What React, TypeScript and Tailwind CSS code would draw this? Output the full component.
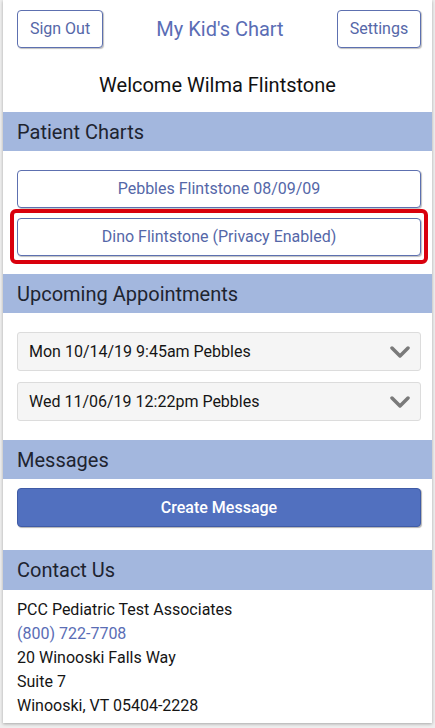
import React from 'react';

const font = { fontFamily: 'Roboto, "Noto Sans", Arial, sans-serif' };

const SectionHeader: React.FC<{ title: string; h?: string }> = ({ title, h = 'h-[39px]' }) => (
  <div className={`${h} bg-[#a3b7de] px-[14px] flex items-center text-[20px] text-[#1e2430]`}>
    {title}
  </div>
);

const OutlineButton: React.FC<{ label: string; className?: string }> = ({ label, className = '' }) => (
  <button
    className={`h-[38px] rounded-[4px] border border-[#5d70b0] bg-white text-[#5567a8] shadow-[1px_1px_1px_rgba(0,0,0,0.25)] ${className}`}
  >
    {label}
  </button>
);

const Chevron = () => (
  <svg width="20" height="14" viewBox="0 0 20 14" className="shrink-0">
    <polyline points="2,3 10,11 18,3" fill="none" stroke="#7a7a7a" strokeWidth="3.5" strokeLinecap="round" strokeLinejoin="round" />
  </svg>
);

const Appointment: React.FC<{ label: string }> = ({ label }) => (
  <div className="h-[39px] rounded-[3px] border border-[#dcdcdc] bg-[#f5f5f5] pl-[11px] pr-[10px] flex items-center justify-between text-[16px] text-[#151515]">
    <span>{label}</span>
    <Chevron />
  </div>
);

export default function App() {
  return (
    <div className="min-h-[728px] bg-[#eeeeee] px-[3px]" style={font}>
      <div className="bg-white shadow-[0_1px_3px_rgba(0,0,0,0.3)] pb-[5px]">
        <div className="pl-[14px] pr-[11px] pt-[10px] flex items-center justify-between">
          <OutlineButton label="Sign Out" className="w-[86px] text-[16px]" />
          <div className="text-[20px] text-[#5a6db5]">My Kid's Chart</div>
          <OutlineButton label="Settings" className="w-[84px] text-[16px]" />
        </div>
        <div className="mt-[25px] mb-[15px] text-center text-[20px] leading-[24px] text-[#111]">
          Welcome Wilma Flintstone
        </div>

        <SectionHeader title="Patient Charts" />
        <div className="pl-[14px] pr-[11px] pt-[19px] pb-[18px] flex flex-col gap-[10px]">
          <OutlineButton label="Pebbles Flintstone 08/09/09" className="w-full text-[16px]" />
          <div className="relative">
            <OutlineButton label="Dino Flintstone (Privacy Enabled)" className="w-full text-[16px]" />
            <span className="pointer-events-none absolute -top-[9px] -bottom-[8px] -left-[7px] -right-[7px] rounded-[6px] border-[4px] border-[#d9000d]" />
          </div>
        </div>

        <SectionHeader title="Upcoming Appointments" />
        <div className="pl-[14px] pr-[11px] pt-[19px] pb-[19px] flex flex-col gap-[11px]">
          <Appointment label="Mon 10/14/19 9:45am Pebbles" />
          <Appointment label="Wed 11/06/19 12:22pm Pebbles" />
        </div>

        <SectionHeader title="Messages" />
        <div className="pl-[14px] pr-[11px] pt-[9px] pb-[23px]">
          <button className="w-full h-[39px] rounded-[4px] bg-[#5170bf] border border-[#3f5ba6] text-white text-[16px] font-medium shadow-[1px_1px_1px_rgba(0,0,0,0.3)]">
            Create Message
          </button>
        </div>

        <SectionHeader title="Contact Us" h="h-[40px]" />
        <div className="px-[14px] pt-[8px] text-[16px] leading-[24px] text-[#151515]">
          <div>PCC Pediatric Test Associates</div>
          <div className="text-[#5a6db5]">(800) 722-7708</div>
          <div>20 Winooski Falls Way</div>
          <div>Suite 7</div>
          <div>Winooski, VT 05404-2228</div>
        </div>
      </div>
    </div>
  );
}
